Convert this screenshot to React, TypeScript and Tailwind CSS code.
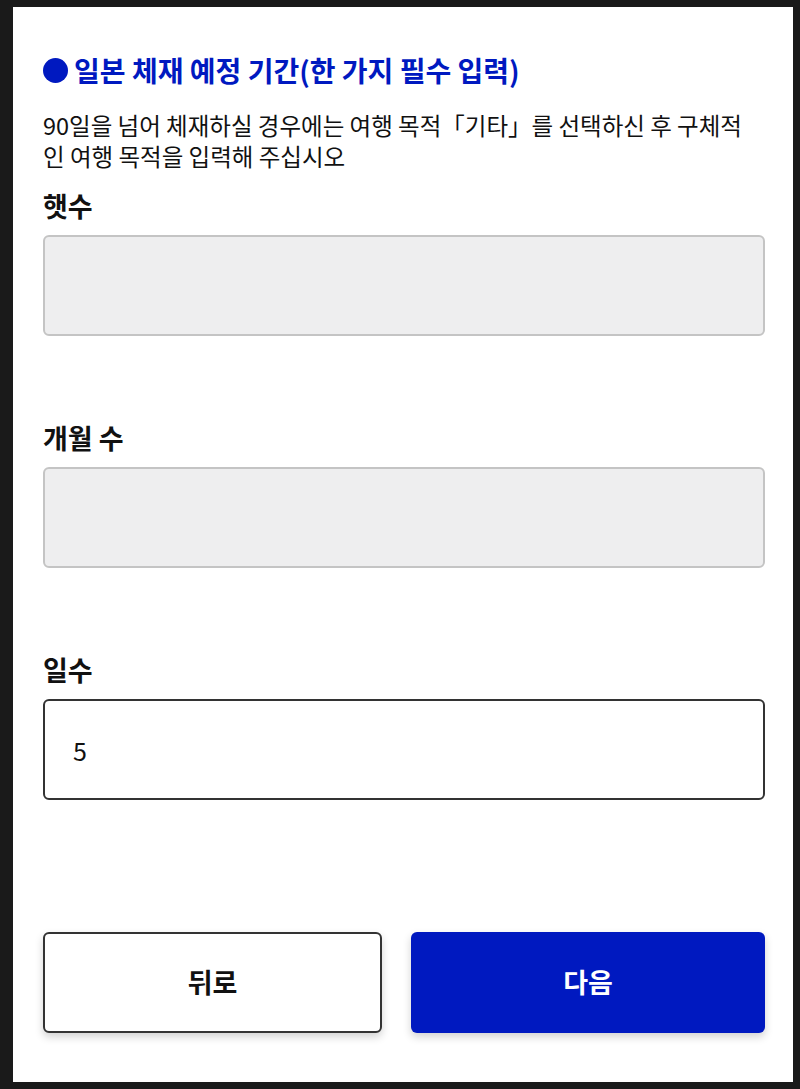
export default function App() {
  const font = "font-['Noto_Sans_CJK_KR','Noto_Sans',sans-serif]";
  return (
    <div className={`h-[1089px] bg-[#1a1a1a] pt-[7px] pb-[7px] pl-[13px] pr-[7px] ${font}`}>
      <div className="h-full bg-white pl-[30px] pr-[28px] pt-[46px]">
        <h2 className="flex items-center gap-[6px] text-[28px] leading-[34px] font-bold text-[#0019c0]">
          <span className="h-[25px] w-[25px] shrink-0 rounded-full bg-[#0019c0]" />
          일본 체재 예정 기간(한 가지 필수 입력)
        </h2>
        <p className="mt-[23px] text-[23.5px] leading-[31px] text-[#111]">
          90일을 넘어 체재하실 경우에는 여행 목적「기타」를 선택하신 후 구체적
          <br />
          인 여행 목적을 입력해 주십시오
        </p>

        <label className="mt-[18px] block text-[27px] leading-[32px] font-bold text-[#111]">햇수</label>
        <input
          disabled
          className="mt-[13px] block h-[101px] w-full rounded-[6px] border-2 border-[#c4c4c4] bg-[#eeeeef]"
        />

        <label className="mt-[86px] block text-[27px] leading-[32px] font-bold text-[#111]">개월 수</label>
        <input
          disabled
          className="mt-[13px] block h-[101px] w-full rounded-[6px] border-2 border-[#c4c4c4] bg-[#eeeeef]"
        />

        <label className="mt-[86px] block text-[27px] leading-[32px] font-bold text-[#111]">일수</label>
        <input
          defaultValue="5"
          className="mt-[13px] block h-[101px] w-full rounded-[6px] border-2 border-[#333] bg-white px-[28px] text-[25px] text-[#111] outline-none"
        />

        <div className="mt-[132px] flex gap-[29px]">
          <button className="h-[101px] w-[339px] rounded-[6px] border-2 border-[#333] bg-white text-[27px] font-bold text-[#111] shadow-[0_4px_8px_rgba(0,0,0,0.18)]">
            뒤로
          </button>
          <button className="h-[101px] flex-1 rounded-[6px] bg-[#0019c0] text-[27px] font-bold text-white shadow-[0_4px_8px_rgba(0,0,0,0.18)]">
            다음
          </button>
        </div>
      </div>
    </div>
  );
}
